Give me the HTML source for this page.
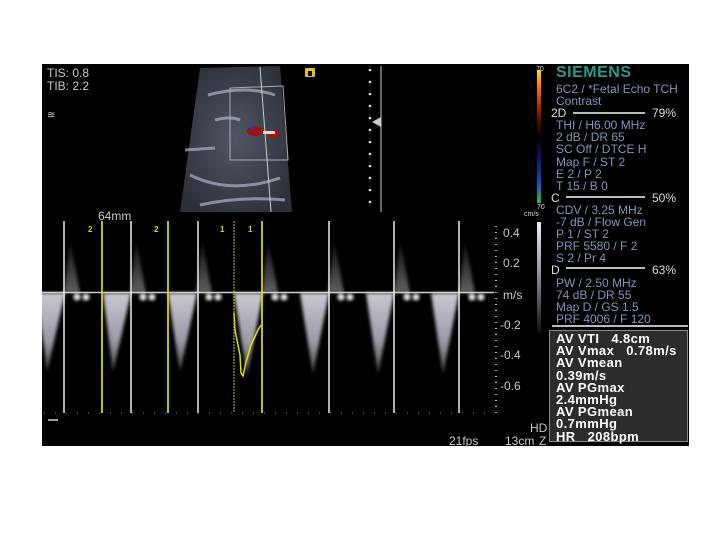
<!DOCTYPE html>
<html><head><meta charset="utf-8"><style>
body{margin:0;width:720px;height:540px;background:#fff;overflow:hidden;font-family:"Liberation Sans",sans-serif}
#b{position:absolute;left:42px;top:64px;width:647px;height:382px;background:#000;overflow:hidden}
.t{position:absolute;color:#c8c8c8;font-size:12px;line-height:12px;white-space:nowrap}
.p{position:absolute;left:556px;font-size:12px;line-height:12.1px;color:#8094bb;white-space:nowrap}
.w{position:absolute;font-size:12px;line-height:12px;color:#ddd;white-space:nowrap}
.m{position:absolute;left:549px;top:330px;width:139px;height:112px;background:#2c2c2c;border:1px solid #888;box-sizing:border-box}
.m div{font-size:13px;line-height:12.2px;color:#fff;font-weight:bold;padding-left:6px;white-space:nowrap;letter-spacing:0.4px}
</style></head><body>
<div id="b"></div>
<svg width="720" height="540" style="position:absolute;left:0;top:0">
<defs>
<radialGradient id="sg" cx="0.5" cy="0.5" r="0.6"><stop offset="0" stop-color="#505664"/><stop offset="1" stop-color="#2c3038"/></radialGradient>
<linearGradient id="tg" x1="0" y1="0" x2="0" y2="1"><stop offset="0" stop-color="#c8c8d0"/><stop offset="0.6" stop-color="#9a9aa6"/><stop offset="1" stop-color="#444"/></linearGradient>
<linearGradient id="ug" x1="0" y1="1" x2="0" y2="0"><stop offset="0" stop-color="#777"/><stop offset="1" stop-color="#111"/></linearGradient>
<linearGradient id="cb" x1="0" y1="0" x2="0" y2="1"><stop offset="0" stop-color="#ffe000"/><stop offset="0.15" stop-color="#ff6000"/><stop offset="0.35" stop-color="#701000"/><stop offset="0.5" stop-color="#000"/><stop offset="0.65" stop-color="#101060"/><stop offset="0.85" stop-color="#1050c0"/><stop offset="1" stop-color="#20c040"/></linearGradient>
<linearGradient id="gb" x1="0" y1="0" x2="0" y2="1"><stop offset="0" stop-color="#f0f0ff"/><stop offset="0.5" stop-color="#8888a0"/><stop offset="1" stop-color="#111"/></linearGradient>
<clipPath id="cp"><rect x="42" y="220" width="450" height="195"/></clipPath>
<filter id="bl"><feGaussianBlur stdDeviation="1.5"/></filter>
</defs>
<polygon points="200,68 280,66 292,212 180,212" fill="url(#sg)"/>
<path d="M208,95 Q245,85 275,95 M215,120 Q230,116 240,120 M190,175 Q230,195 280,178 M200,205 Q240,196 285,200 M185,150 L215,148" stroke="#aab4c8" stroke-width="3" fill="none" opacity="0.7"/>
<path d="M230,88 L283,86 L288,160 L230,160 Z" stroke="#aaa" stroke-width="1" fill="none"/>
<line x1="260" y1="67" x2="271" y2="212" stroke="#ccc" stroke-width="1"/>
<ellipse cx="255" cy="131" rx="8" ry="5" fill="#a01010"/><ellipse cx="273" cy="134" rx="6" ry="4" fill="#b01010"/><circle cx="252" cy="128" r="2" fill="#2040c0"/>
<rect x="263" y="131" width="12" height="3" fill="#ddd"/>
<rect x="305" y="68" width="10" height="9" rx="1" fill="#e0c020"/><rect x="308" y="71" width="4" height="5" fill="#000"/>
<g fill="#ddd"><circle cx="370" cy="70" r="1.3"/><circle cx="370" cy="82" r="1.3"/><circle cx="370" cy="94" r="1.3"/><circle cx="370" cy="106" r="1.3"/><circle cx="370" cy="118" r="1.3"/><circle cx="370" cy="130" r="1.3"/><circle cx="370" cy="142" r="1.3"/><circle cx="370" cy="154" r="1.3"/><circle cx="370" cy="166" r="1.3"/><circle cx="370" cy="178" r="1.3"/><circle cx="370" cy="190" r="1.3"/><circle cx="370" cy="202" r="1.3"/></g>
<line x1="381" y1="66" x2="381" y2="212" stroke="#ccc"/>
<polygon points="372,122 381,117 381,127" fill="#ccc"/>
<g clip-path="url(#cp)">
<g filter="url(#bl)">
<g fill="url(#tg)">
<polygon points="37,293 65,293 47,372"/><polygon points="103,293 131,293 113,372"/><polygon points="168,293 197,293 180,372"/><polygon points="234,293 263,293 247,376"/><polygon points="300,293 329,293 313,374"/><polygon points="366,293 394,293 378,374"/><polygon points="431,293 459,293 443,374"/>
</g>
<g fill="url(#ug)" opacity="0.8">
<polygon points="64,293 80,293 70,240"/><polygon points="130,293 146,293 136,240"/><polygon points="196,293 212,293 202,240"/><polygon points="262,293 278,293 268,240"/><polygon points="328,293 344,293 334,240"/><polygon points="394,293 410,293 400,240"/><polygon points="459,293 475,293 465,240"/>
</g>
<g fill="#eee"><circle cx="77" cy="297" r="3.5"/><circle cx="86" cy="297" r="3.5"/><circle cx="143" cy="297" r="3.5"/><circle cx="152" cy="297" r="3.5"/><circle cx="209" cy="297" r="3.5"/><circle cx="218" cy="297" r="3.5"/><circle cx="275" cy="297" r="3.5"/><circle cx="284" cy="297" r="3.5"/><circle cx="341" cy="297" r="3.5"/><circle cx="350" cy="297" r="3.5"/><circle cx="407" cy="297" r="3.5"/><circle cx="416" cy="297" r="3.5"/><circle cx="472" cy="297" r="3.5"/><circle cx="481" cy="297" r="3.5"/></g>
</g>
</g>
<line x1="42" y1="292.5" x2="494" y2="292.5" stroke="#ccc" stroke-width="1.5"/>
<g stroke="#eee" stroke-width="1.5"><line x1="64" y1="221" x2="64" y2="413"/><line x1="131" y1="221" x2="131" y2="413"/><line x1="198" y1="221" x2="198" y2="413"/><line x1="329" y1="221" x2="329" y2="413"/><line x1="394" y1="221" x2="394" y2="413"/><line x1="459" y1="221" x2="459" y2="413"/></g>
<g stroke="#d8d800" stroke-width="1.8"><line x1="102" y1="221" x2="102" y2="413"/><line x1="168" y1="221" x2="168" y2="413"/><line x1="262" y1="221" x2="262" y2="413"/></g>
<line x1="234" y1="221" x2="234" y2="413" stroke="#c8c800" stroke-width="1" stroke-dasharray="2,1"/>
<path d="M234,313 L235,330 L240,355 L241,373 L243,376 L246,362 L251,345 L258,330 L261,325" stroke="#e0e000" stroke-width="1.5" fill="none"/>
<g fill="#d8d800" font-size="8" font-weight="bold" font-family="Liberation Sans"><text x="88" y="232">2</text><text x="154" y="232">2</text><text x="220" y="232">1</text><text x="248" y="232">1</text></g>
<path d="M44,413h448" stroke="#888" stroke-dasharray="1,10"/>
<path d="M496,226v188" stroke="#aaa" stroke-dasharray="1,5" stroke-width="2"/>
<line x1="48" y1="420" x2="58" y2="420" stroke="#ccc" stroke-width="1.5"/>
<rect x="537" y="70" width="4" height="133" fill="url(#cb)"/>
<rect x="537" y="222" width="4" height="110" fill="url(#gb)"/>
<line x1="573" y1="113" x2="645" y2="113" stroke="#bbb" stroke-width="2"/>
<line x1="566" y1="197" x2="645" y2="197" stroke="#bbb" stroke-width="2"/>
<line x1="566" y1="268" x2="645" y2="268" stroke="#bbb" stroke-width="2"/>
<line x1="552" y1="326" x2="688" y2="326" stroke="#bbb" stroke-width="2"/>
</svg>
<div class="t" style="left:47px;top:67px">TIS: 0.8</div>
<div class="t" style="left:47px;top:80px">TIB: 2.2</div>
<div class="t" style="left:47px;top:110px;font-size:10px">≊</div>
<div class="t" style="left:98px;top:210px">64mm</div>
<div class="t" style="left:503px;top:227px">0.4</div>
<div class="t" style="left:503px;top:257px">0.2</div>
<div class="t" style="left:503px;top:289px">m/s</div>
<div class="t" style="left:500px;top:319px">-0.2</div>
<div class="t" style="left:500px;top:349px">-0.4</div>
<div class="t" style="left:500px;top:380px">-0.6</div>
<div class="t" style="left:449px;top:435px">21fps</div>
<div class="t" style="left:505px;top:435px">13cm</div>
<div class="t" style="left:530px;top:422px">HD</div>
<div class="t" style="left:539px;top:435px">Z</div>
<div class="t" style="left:536px;top:64px;font-size:7px;color:#ddd">70</div>
<div class="t" style="left:537px;top:202px;font-size:7px;color:#ddd">70</div>
<div class="t" style="left:524px;top:209px;font-size:7px;color:#ddd">cm/s</div>
<div class="p" style="top:65px;font-size:16px;line-height:16px;font-weight:bold;color:#2a9a8c;letter-spacing:0.5px">SIEMENS</div>
<div class="p" style="top:83px">6C2 / *Fetal Echo TCH<br>Contrast<br>&nbsp;<br>THI / H6.00 MHz<br>2 dB / DR 65<br>SC Off / DTCE H<br>Map F / ST 2<br>E 2 / P 2<br>T 15 / B 0<br>&nbsp;<br>CDV / 3.25 MHz<br>-7 dB / Flow Gen<br>P 1 / ST 2<br>PRF 5580 / F 2<br>S 2 / Pr 4<br>&nbsp;<br>PW / 2.50 MHz<br>74 dB / DR 55<br>Map D / GS 1.5<br>PRF 4006 / F 120</div>
<div class="w" style="left:551px;top:107px">2D</div><div class="w" style="left:652px;top:107px">79%</div>
<div class="w" style="left:551px;top:192px">C</div><div class="w" style="left:652px;top:192px">50%</div>
<div class="w" style="left:551px;top:264px">D</div><div class="w" style="left:652px;top:264px">63%</div>
<div class="m" style="padding-top:2px"><div>AV VTI&nbsp;&nbsp;&nbsp;4.8cm</div><div>AV Vmax&nbsp;&nbsp;&nbsp;0.78m/s</div><div>AV Vmean</div><div>0.39m/s</div><div>AV PGmax</div><div>2.4mmHg</div><div>AV PGmean</div><div>0.7mmHg</div><div>HR&nbsp;&nbsp;&nbsp;208bpm</div></div>
</body></html>
